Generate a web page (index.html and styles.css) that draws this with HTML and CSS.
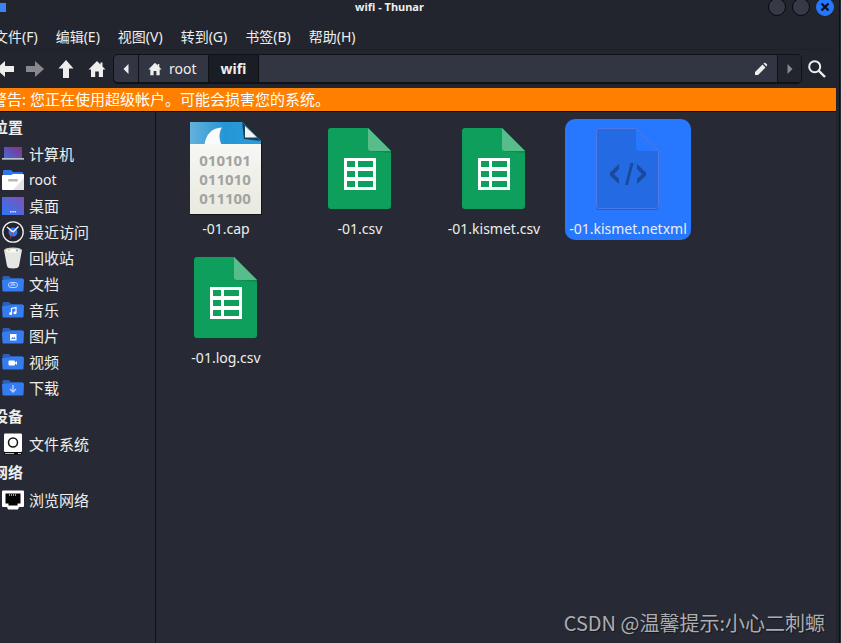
FILE: index.html
```
<!DOCTYPE html>
<html lang="zh-CN">
<head>
  <meta charset="UTF-8">
  <title>wifi - Thunar</title>
  <link rel="stylesheet" href="styles.css">
</head>
<body>

  <!-- shared shapes -->
  <svg class="defs" aria-hidden="true">
    <symbol id="house" viewBox="0 0 18 18">
      <path d="M9 1 L0.5 9.5 H3 V17 H7.200 V11.500 H10.800 V17 H15 V9.500 H17.500 L14.500 6.500 V2.500 H12.500 V4.500 Z"/>
    </symbol>
    <symbol id="folder" viewBox="0 0 22 18">
      <path fill="#2b5fb8" d="M1 1.500 Q1 1 2 1 H7 L9 3 H20 Q21 3 21 4 V9 H0.500 V2 Z"/>
      <path fill="#357cf0" d="M0 5.500 Q0 5 1 5 L9 4 H21 Q22 4 22 5 L21.500 15.500 Q21.500 16.500 20.500 16.500 H1.500 Q0.500 16.500 0.500 15.500 Z"/>
    </symbol>
    <symbol id="sheet" viewBox="0 0 96 96">
      <path fill="#0b3d2a" opacity="0.5" d="M18 9 H56 L79 31 V88 Q79 90 77 90 H18 Q16 90 16 88 V11 Z"/>
      <path fill="#0f9f5c" d="M19 8 H56 L79 31 V86 Q79 89 76 89 H19 Q16 89 16 86 V11 Q16 8 19 8 Z"/>
      <path fill="#0c8a4f" d="M57 31 H79 V33 Z"/>
      <path fill="#56bd8b" d="M56 8 L79 31 H59 Q56 31 56 28 Z"/>
      <path fill="#fff" fill-rule="evenodd" d="M32 38 H64 V70 H32 Z M35 41 V47 H43 V41 Z M46 41 V47 H61 V41 Z M35 51 V57 H43 V51 Z M46 51 V57 H61 V51 Z M35 61 V67 H43 V61 Z M46 61 V67 H61 V61 Z"/>
    </symbol>
  </svg>

  <div class="window">
    <header class="titlebar">
      <span class="app-icon"></span>
      <h1>wifi - Thunar</h1>
      <div class="controls">
        <button aria-label="最小化"></button>
        <button aria-label="最大化"></button>
        <button class="close" aria-label="关闭">
          <svg width="10" height="10" viewBox="0 0 10 10"><path d="M1.500 1.500 L8.500 8.500 M8.500 1.500 L1.500 8.500" stroke="#0b1020" stroke-width="2.400"/></svg>
        </button>
      </div>
    </header>

    <nav class="menubar">
      <button>文件(F)</button>
      <button>编辑(E)</button>
      <button>视图(V)</button>
      <button>转到(G)</button>
      <button>书签(B)</button>
      <button>帮助(H)</button>
    </nav>

    <div class="toolbar">
      <button class="tool" aria-label="后退"><svg width="20" height="18" viewBox="0 0 20 18"><path d="M0 9 L9 1 V6 H18 V12 H9 V17 Z"/></svg></button>
      <button class="tool" aria-label="前进" disabled><svg width="20" height="18" viewBox="0 0 20 18"><path d="M19 9 L10 1 V6 H1 V12 H10 V17 Z"/></svg></button>
      <button class="tool" aria-label="上级"><svg width="18" height="20" viewBox="0 0 18 20"><path d="M9 1 L1.500 9.500 H6 V19 H12 V9.500 H16.500 Z"/></svg></button>
      <button class="tool" aria-label="主目录"><svg width="18" height="18"><use href="#house"/></svg></button>

      <div class="pathbar">
        <button class="arrow" aria-label="向左"><svg width="6" height="10" viewBox="0 0 6 10"><path d="M5.500 0 V10 L0.500 5 Z"/></svg></button>
        <button class="crumb"><svg width="14" height="14"><use href="#house"/></svg>root</button>
        <button class="crumb current">wifi</button>
        <div class="rest">
          <button class="edit" aria-label="编辑路径"><svg width="14" height="14" viewBox="0 0 14 14"><path d="M1 10 L8.500 2.500 L11.500 5.500 L4 13 H1 Z M9.500 1.500 L10.500 0.700 Q11 0.500 11.500 1 L13 2.500 Q13.500 3 13 3.600 L12.300 4.500 Z"/></svg></button>
        </div>
        <button class="arrow next" aria-label="向右"><svg width="6" height="10" viewBox="0 0 6 10"><path d="M0.500 0 V10 L5.500 5 Z"/></svg></button>
      </div>

      <button class="search" aria-label="搜索"><svg width="18" height="18" viewBox="0 0 18 18"><circle cx="6.700" cy="6.700" r="5.500" fill="none" stroke="#eeeeec" stroke-width="2"/><path d="M10.500 10.500 L17 17" stroke="#eeeeec" stroke-width="2.400"/></svg></button>
    </div>

    <p class="warning">警告: 您正在使用超级帐户。可能会损害您的系统。</p>

    <div class="content">
      <aside class="sidebar">
        <h2>位置</h2>
        <ul>
          <li><a href="#">
            <svg width="22" height="22" viewBox="0 0 22 22"><defs><linearGradient id="lap" x1="0" y1="1" x2="1" y2="0"><stop offset="0" stop-color="#3f6bdc"/><stop offset="1" stop-color="#8c2f80"/></linearGradient></defs><rect x="2" y="4" width="18" height="11" fill="url(#lap)"/><rect y="15.300" width="22" height="1.200" fill="#fff"/></svg>
            计算机</a></li>
          <li><a class="latin" href="#">
            <svg width="22" height="22" viewBox="0 0 22 22"><path fill="#2f74ea" d="M1 2 Q1 1 2 1 H9 L11 3 H20 Q21 3 21 4 V9 H1 Z"/><path fill="#fff" d="M0 7 Q0 6 1 6 H9 L11 5 H21 Q22 5 22 6 V20 Q22 21 21 21 H1 Q0 21 0 20 Z"/><path fill="#e3e3e3" d="M22 9 V20 Q22 21 21 21 H11 Z"/><rect x="6" y="10" width="10" height="2.500" rx="1.200" fill="#b9b9b9"/></svg>
            root</a></li>
          <li><a href="#">
            <svg width="22" height="22" viewBox="0 0 22 22"><defs><linearGradient id="desk" x1="0" y1="1" x2="1" y2="0"><stop offset="0" stop-color="#2c78f5"/><stop offset="1" stop-color="#8150b8"/></linearGradient></defs><rect y="2" width="22" height="18" fill="url(#desk)"/><path fill="#dbe6ff" d="M8 16 h1.500 v1.500 h-1.500 Z M10.300 16 h1.500 v1.500 h-1.500 Z M12.600 16 h1.500 v1.500 h-1.500 Z"/></svg>
            桌面</a></li>
          <li><a href="#">
            <svg width="22" height="22" viewBox="0 0 22 22"><circle cx="11" cy="11" r="10.200" fill="#23252e" stroke="#f2f2f2" stroke-width="1.300"/><circle cx="11" cy="11" r="4.500" fill="#2f78f2"/><path d="M5 6 L11 11 L16.500 5.500" fill="none" stroke="#fff" stroke-width="1.300"/><path d="M11 11 L8 17.500" stroke="#d0343f"/></svg>
            最近访问</a></li>
          <li><a href="#">
            <svg width="22" height="22" viewBox="0 0 22 22"><path fill="#e6e6e4" d="M2 3 H20 L17 19 Q16.500 21.500 11 21.500 Q5.500 21.500 5 19 Z"/><ellipse cx="11" cy="3.300" rx="9" ry="2.800" fill="#d2d2d0"/><ellipse cx="11" cy="3.800" rx="7.500" ry="2" fill="#f7f7f5"/><circle cx="7" cy="3" r="1" fill="#e8cf74"/><circle cx="15" cy="3.500" r="1" fill="#63b08c"/></svg>
            回收站</a></li>
          <li><a href="#">
            <svg width="22" height="18" viewBox="0 0 22 18"><use href="#folder"/><g fill="none" stroke="#bcd4ff"><rect x="6.500" y="7.500" width="9" height="5" rx="2.500"/><path d="M13.500 10 H10 Q8.500 10 8.500 11"/><path d="M9 9 H12.500"/></g></svg>
            文档</a></li>
          <li><a href="#">
            <svg width="22" height="18" viewBox="0 0 22 18"><use href="#folder"/><path d="M9.500 12.500 V7.500 L14 6.500 V11.500" fill="none" stroke="#fff" stroke-width="1.200"/><circle cx="8.700" cy="12.500" r="1.500" fill="#fff"/><circle cx="13" cy="11.800" r="1.500" fill="#fff"/></svg>
            音乐</a></li>
          <li><a href="#">
            <svg width="22" height="18" viewBox="0 0 22 18"><use href="#folder"/><rect x="8" y="7" width="6.500" height="6.500" fill="#fff"/><path d="M9 12 L10.500 10 L11.500 11 L12.500 9.500 L13.500 12 Z" fill="#4e8bf0"/></svg>
            图片</a></li>
          <li><a href="#">
            <svg width="22" height="18" viewBox="0 0 22 18"><use href="#folder"/><rect x="6.500" y="7.500" width="6.500" height="5" rx="1" fill="#fff"/><path d="M12.500 10 L15 8 V12 Z" fill="#fff"/></svg>
            视频</a></li>
          <li><a href="#">
            <svg width="22" height="18" viewBox="0 0 22 18"><use href="#folder"/><path d="M11 6 V12.500 M8 10 L11 13 L14 10" fill="none" stroke="#bcd4ff" stroke-width="1.300"/></svg>
            下载</a></li>
        </ul>

        <h2>设备</h2>
        <ul>
          <li><a href="#">
            <svg width="22" height="22" viewBox="0 0 22 22"><rect x="2" y="0.500" width="18" height="18.500" rx="1" fill="#fff"/><circle cx="11" cy="9.500" r="4.500" fill="none" stroke="#111" stroke-width="1.500"/><rect x="2" y="19" width="18" height="2.500" fill="#08090c"/><path d="M3 20.500 H12 M16 20.500 H19" stroke="#bbb"/></svg>
            文件系统</a></li>
        </ul>

        <h2>网络</h2>
        <ul>
          <li><a href="#">
            <svg width="22" height="22" viewBox="0 0 22 22"><path fill="#fff" d="M1 1.500 H21 Q22 1.500 22 2.500 V17 Q22 18 21 18 H17 L16 20.500 H6 L5 18 H1 Q0 18 0 17 V2.500 Q0 1.500 1 1.500 Z"/><path fill="#050505" d="M3.500 4.500 H18.500 V14.500 H15.500 V16.500 H6.500 V14.500 H3.500 Z"/><path stroke="#b59a4a" d="M7.500 5 V7 M9.500 5 V7 M11.500 5 V7 M13.500 5 V7"/></svg>
            浏览网络</a></li>
        </ul>
      </aside>

      <main class="files">
        <a class="file" href="#">
          <svg width="96" height="96" viewBox="0 0 96 96">
            <defs>
              <linearGradient id="paper" x1="0" y1="0" x2="0" y2="1"><stop offset="0" stop-color="#fbfbfa"/><stop offset="1" stop-color="#e9e9e0"/></linearGradient>
              <linearGradient id="sea" x1="0" y1="0" x2="1" y2="0"><stop offset="0" stop-color="#63b2dc"/><stop offset="0.500" stop-color="#2595d6"/><stop offset="1" stop-color="#2a9ddb"/></linearGradient>
            </defs>
            <path fill="#14151a" d="M12 3 H65 L84 22 V95 H12 Z"/>
            <path fill="url(#paper)" d="M12 2 H64 L83 21 V94 H12 Z"/>
            <path fill="url(#sea)" d="M12 2 H64 L83 21 V24 H12 Z"/>
            <path fill="#fbfbfa" d="M26.500 24.500 C28 15 33 8 44 7.500 C40.500 13 41 19 43.500 24.500 Z"/>
            <path fill="#17435f" d="M64 2 L83 21 L66 19 Z"/>
            <path fill="#f4f4f2" d="M67 6 L79 17.500 H67 Z"/>
            <g class="bits">
              <text x="47" y="46">010101</text>
              <text x="47" y="65">011010</text>
              <text x="47" y="84">011100</text>
            </g>
          </svg>
          <span>-01.cap</span>
        </a>
        <a class="file" href="#">
          <svg width="96" height="96"><use href="#sheet"/></svg>
          <span>-01.csv</span>
        </a>
        <a class="file" href="#">
          <svg width="96" height="96"><use href="#sheet"/></svg>
          <span>-01.kismet.csv</span>
        </a>
        <a class="file selected" href="#">
          <svg width="96" height="96" viewBox="0 0 96 96">
            <path fill="#1d5fd0" d="M19 9 H56 L79 31 V87 Q79 90 76 90 H19 Q16 90 16 87 Z"/>
            <path fill="#246be3" stroke="#4d78e6" d="M19 8.500 H56 L78.500 31 V86 Q78.500 88.500 76 88.500 H19 Q16.500 88.500 16.500 86 V11 Q16.500 8.500 19 8.500 Z"/>
            <path fill="#2777ff" d="M56 9 L78 31 H59 Q56 31 56 28 Z"/>
            <path fill="none" stroke="#4d78e6" d="M56 8.500 L78.500 31"/>
            <path fill="#1b4a9c" d="M39 44 V49 L34 54 L39 59 V64 L30 55.500 V52.500 Z M57 44 V49 L62 54 L57 59 V64 L66 55.500 V52.500 Z M50.500 43 H53.500 L48 65 H45 Z"/>
          </svg>
          <span>-01.kismet.netxml</span>
        </a>
        <a class="file" href="#">
          <svg width="96" height="96"><use href="#sheet"/></svg>
          <span>-01.log.csv</span>
        </a>
      </main>
    </div>
  </div>

  <div class="watermark">CSDN @温馨提示:小心二刺螈</div>

</body>
</html>
```
FILE: styles.css
```
:root {
  --chrome: #23252e;
  --view: #272a34;
  --field: #323642;
  --line: #0f1116;
  --blue: #2777ff;
  --orange: #ff7f00;
  --text: #eeeeec;
}
* {
  box-sizing: border-box;
  margin: 0;
  padding: 0;
}
body {
  background: var(--view);
  color: var(--text);
  font-family: "Noto Sans", "Noto Sans CJK SC", sans-serif;
  font-size: 14px;
  line-height: 20px;
  overflow: hidden;
}
button {
  background: none;
  border: none;
  color: inherit;
  font: inherit;
}
a {
  color: inherit;
  text-decoration: none;
}
ul {
  list-style: none;
}
svg {
  display: block;
  flex: none;
  fill: var(--text);
}
.defs {
  position: absolute;
  width: 0;
  height: 0;
}

/* the window hangs a little over the top left corner of the screen */
.window {
  display: flex;
  flex-direction: column;
  min-height: calc(100vh + 8px);
  margin: -8px 1px 0 -8px;
  padding-right: 3px;
  border-right: 1px solid var(--line);
  background: var(--chrome);
}

.titlebar {
  display: flex;
  align-items: center;
  height: 30px;
  padding: 0 2px 0 8px;
}
.app-icon {
  width: 6px;
  height: 9px;
  background: #3c82f5;
}
.titlebar h1 {
  flex: 1;
  padding-left: 5px;
  font-size: 11px;
  text-align: center;
}
.controls {
  display: flex;
  gap: 6px;
}
.controls button {
  display: flex;
  align-items: center;
  justify-content: center;
  width: 18px;
  height: 18px;
  border: 1px solid #08090c;
  border-radius: 50%;
  background: #363a46;
}
.controls .close {
  border-color: var(--blue);
  background: var(--blue);
}

.menubar {
  display: flex;
  gap: 18px;
  height: 28px;
  padding: 2px 0 0 2px;
  border-bottom: 1px solid #1f2129;
}

.toolbar {
  display: flex;
  align-items: center;
  height: 38px;
  padding-right: 10px;
}
.tool {
  display: flex;
  align-items: center;
  justify-content: center;
  width: 31px;
}
.tool:first-child {
  width: 27px;
}
.tool:disabled svg {
  fill: #87888b;
}
.pathbar {
  display: flex;
  flex: 1;
  height: 30px;
  margin: 0 6px 0 1px;
  border: 1px solid var(--line);
  border-bottom-width: 2px;
  border-radius: 5px;
  background: var(--field);
  overflow: hidden;
}
.pathbar button {
  display: flex;
  align-items: center;
  justify-content: center;
}
.arrow {
  width: 25px;
  border-right: 1px solid var(--line);
}
.crumb {
  gap: 7px;
  padding: 0 11px 0 9px;
  border-right: 1px solid var(--line);
}
.pathbar .current {
  padding: 0 12px;
  background: #1b1d24;
  font-weight: bold;
}
.rest {
  display: flex;
  flex: 1;
  justify-content: flex-end;
}
.edit {
  width: 33px;
}
.pathbar .next {
  width: 24px;
  border-right: none;
  border-left: 1px solid var(--line);
  background: var(--chrome);
}
.next svg {
  fill: #87888b;
}
.search {
  flex: none;
}

.warning {
  height: 24px;
  padding-top: 1px;
  border-bottom: 1px solid var(--line);
  background: var(--orange);
  color: #fff;
  font-size: 15px;
}

.content {
  display: flex;
  flex: 1;
  background: var(--view);
}
.sidebar {
  flex: none;
  width: 164px;
  border-right: 1px solid var(--line);
  font-size: 15px;
}
.sidebar h2 {
  height: 30px;
  padding-left: 1px;
  font-size: 15px;
  line-height: 30px;
}
.sidebar h2:first-child {
  height: 29px;
}
.sidebar a {
  display: flex;
  align-items: center;
  gap: 5px;
  height: 26px;
  padding-left: 10px;
}
.sidebar .latin {
  font-size: 14px;
}

.files {
  display: grid;
  flex: 1;
  grid-template-columns: repeat(auto-fill, 126px);
  align-content: start;
  gap: 8px;
  padding: 7px 24px 7px 7px;
}
.file {
  display: flex;
  flex-direction: column;
  align-items: center;
  gap: 3px;
  padding: 1px 0;
  border-radius: 10px;
  white-space: nowrap;
}
.file.selected {
  background: var(--blue);
}
.bits {
  fill: #a3a3a1;
  font-size: 15px;
  font-weight: bold;
  text-anchor: middle;
}

.watermark {
  position: absolute;
  right: 16px;
  bottom: 5px;
  color: #acadb1;
  font-family: "Noto Sans CJK SC", sans-serif;
  font-size: 20px;
  line-height: 30px;
  text-shadow: 1px 1px 1px #15161b;
}
```
